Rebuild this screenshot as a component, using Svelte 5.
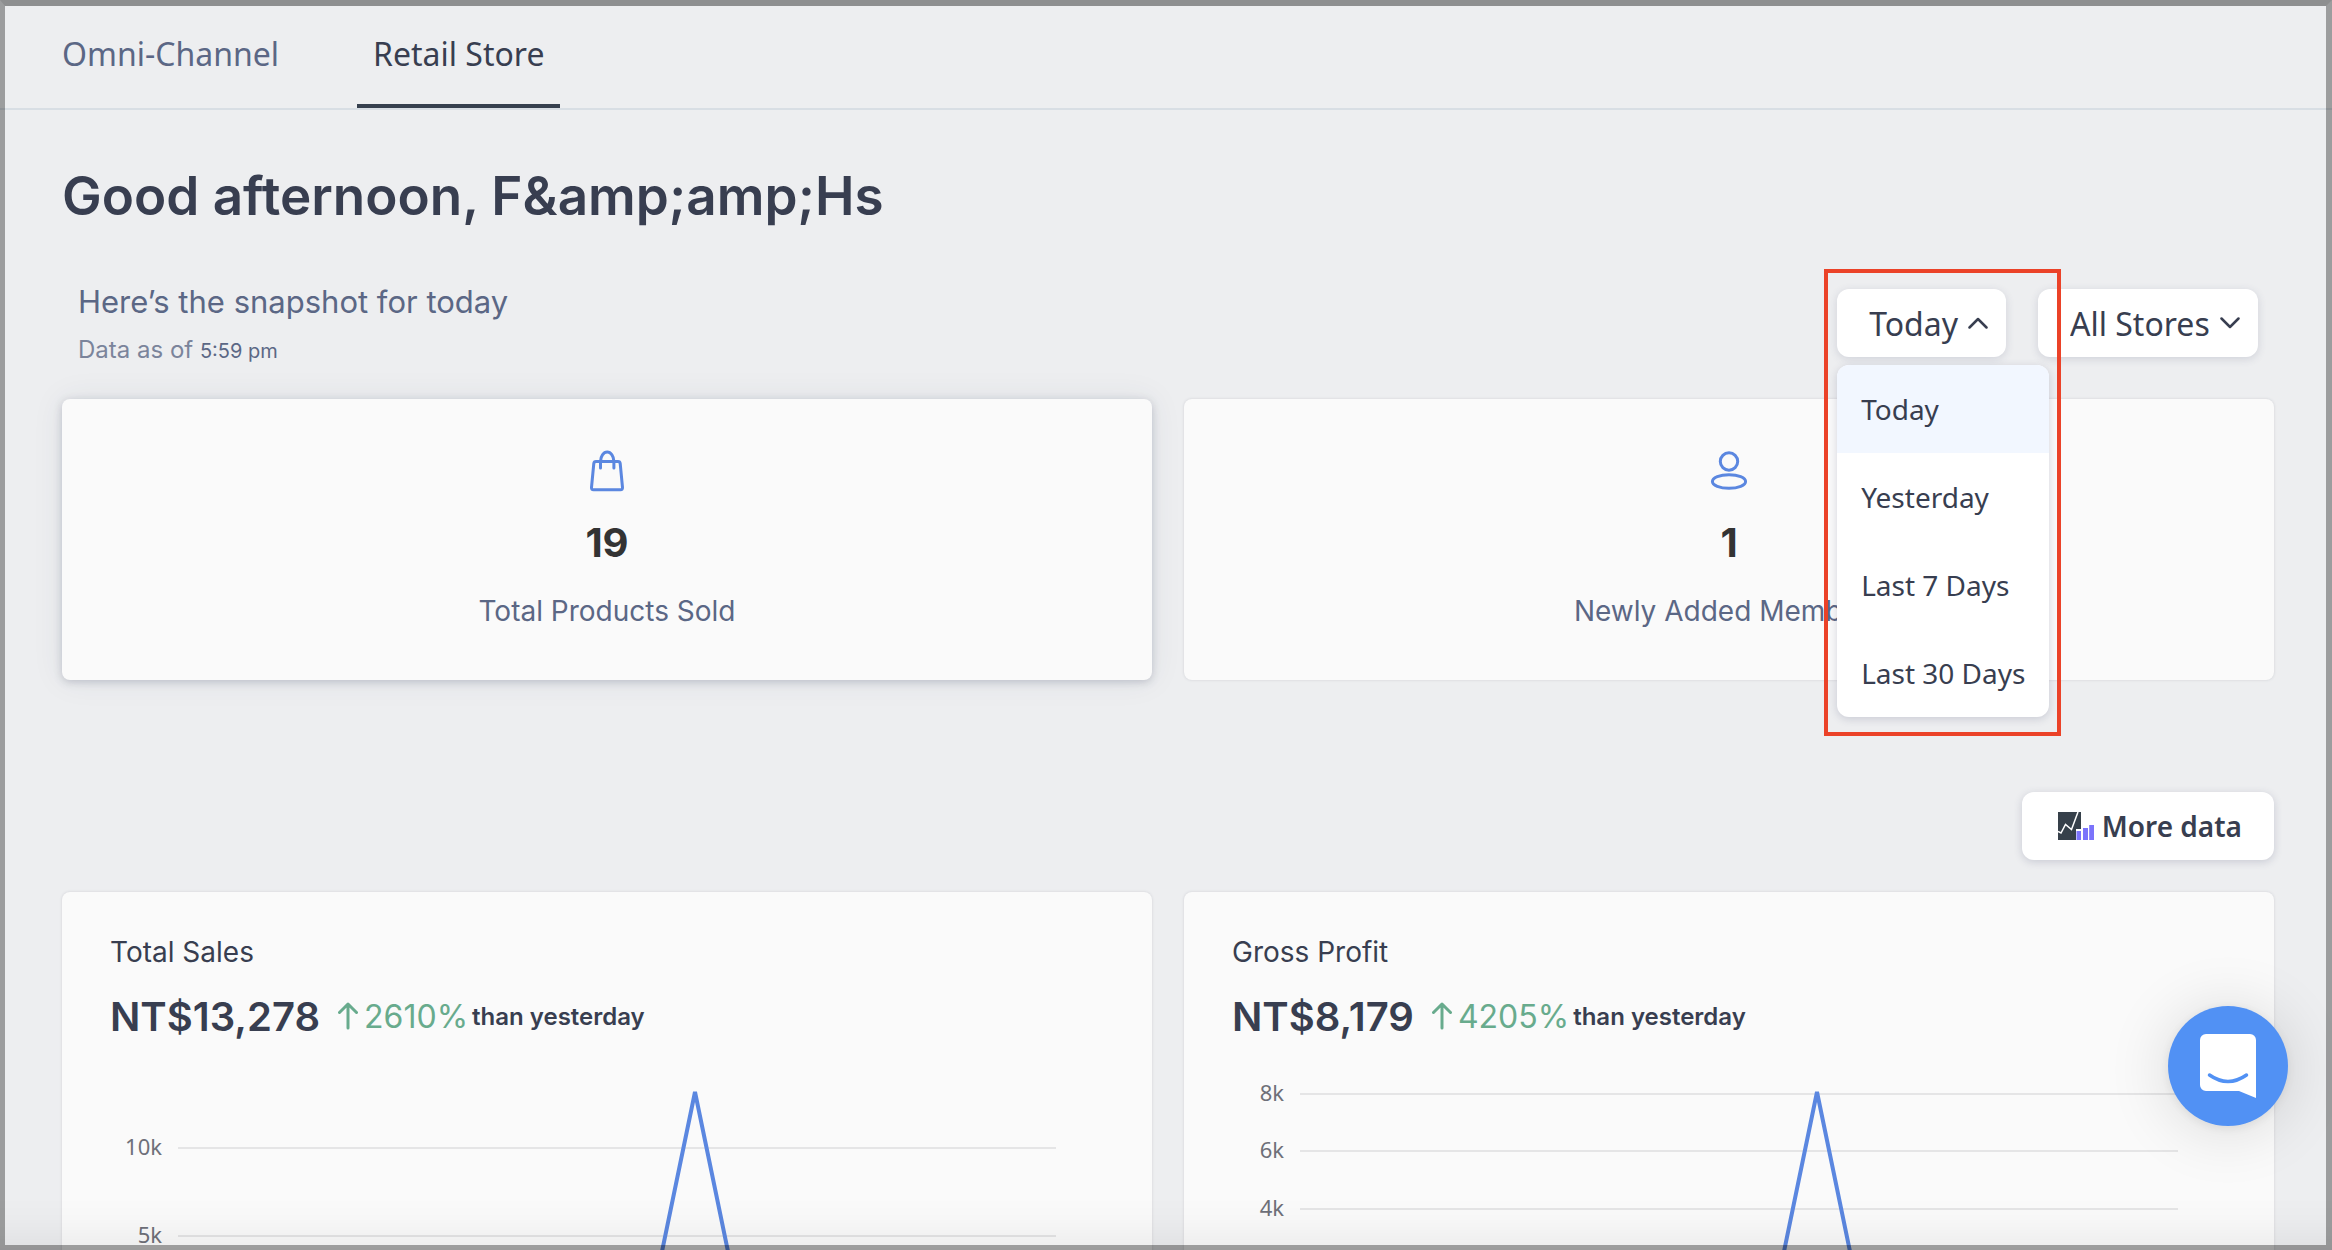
<script lang="ts">
	type Stat = { icon: 'bag' | 'person'; value: number; label: string; raised?: boolean };
	type Tick = { label: string; y: number };
	type Chart = { title: string; value: string; change: string; ticks: Tick[] };

	const tabs = ['Omni-Channel', 'Retail Store'];
	const ranges = ['Today', 'Yesterday', 'Last 7 Days', 'Last 30 Days'];

	const stats: Stat[] = [
		{ icon: 'bag', value: 19, label: 'Total Products Sold', raised: true },
		{ icon: 'person', value: 1, label: 'Newly Added Members' }
	];

	const charts: Chart[] = [
		{
			title: 'Total Sales',
			value: 'NT$13,278',
			change: '2610%',
			ticks: [
				{ label: '10k', y: 80 },
				{ label: '5k', y: 168 }
			]
		},
		{
			title: 'Gross Profit',
			value: 'NT$8,179',
			change: '4205%',
			ticks: [
				{ label: '8k', y: 26 },
				{ label: '6k', y: 83 },
				{ label: '4k', y: 141 }
			]
		}
	];

	let activeTab = $state('Retail Store');
	let range = $state('Today');
	let menuOpen = $state(true);

	function selectRange(value: string) {
		range = value;
		menuOpen = false;
	}
</script>

<div class="page">
	<nav class="tabs">
		{#each tabs as tab (tab)}
			<button class="tab" class:active={tab === activeTab} onclick={() => (activeTab = tab)}>
				{tab}
			</button>
		{/each}
	</nav>

	<main class="content">
		<h1 class="greeting">Good afternoon, F&amp;amp;amp;Hs</h1>

		<div class="toolbar">
			<div class="snapshot">
				<p class="snapshot-title">Here’s the snapshot for today</p>
				<p class="snapshot-time">Data as of <span>5:59 pm</span></p>
			</div>

			<div class="filters">
				<div class="dropdown">
					<button
						class="filter"
						aria-haspopup="menu"
						aria-expanded={menuOpen}
						onclick={() => (menuOpen = !menuOpen)}
					>
						{range}
						<svg class="chevron" class:flipped={menuOpen} viewBox="0 0 20 12">
							<path d="M1.5 1.5 10 10l8.5-8.5" />
						</svg>
					</button>
					{#if menuOpen}
						<div class="menu" role="menu">
							{#each ranges as item (item)}
								<button
									class="menu-item"
									class:selected={item === range}
									role="menuitem"
									onclick={() => selectRange(item)}
								>
									{item}
								</button>
							{/each}
						</div>
						<div class="highlight"></div>
					{/if}
				</div>

				<label class="filter">
					<select aria-label="Store">
						<option>All Stores</option>
					</select>
					<svg class="chevron" viewBox="0 0 20 12">
						<path d="M1.5 1.5 10 10l8.5-8.5" />
					</svg>
				</label>
			</div>
		</div>

		<section class="grid">
			{#each stats as stat (stat.label)}
				<div class="card stat" class:raised={stat.raised}>
					<svg class="stat-icon" viewBox="0 0 48 48">
						{#if stat.icon === 'bag'}
							<path
								d="M13 14.500h22q2 0 2.200 2l2.300 24q.2 2.300-2 2.300h-27q-2.200 0-2-2.300l2.300-24q.2-2 2.200-2zM17.500 21v-6.500a6.700 9.500 0 0 1 13.400 0V21"
							/>
						{:else}
							<circle cx="24" cy="14.5" r="8.7" />
							<ellipse cx="24" cy="34.5" rx="16.600" ry="6.800" />
						{/if}
					</svg>
					<strong class="stat-value">{stat.value}</strong>
					<span class="stat-label">{stat.label}</span>
				</div>
			{/each}
		</section>

		<div class="more">
			<button class="more-btn">
				<svg viewBox="0 0 36 28">
					<path d="M0 0h23v17h-5v11H0z" fill="#36404a" />
					<path
						d="M0 19.500 3 21l4.500-8.500 6 5L20 0"
						fill="none"
						stroke="#ffffff"
						stroke-width="1.5"
					/>
					<path d="M18.500 19h4.500v9h-4.500zM25 16h5v12h-5zM31.200 13H36v15h-4.800z" fill="#7b73fb" />
				</svg>
				More data
			</button>
		</div>

		<section class="grid">
			{#each charts as chart (chart.title)}
				<article class="card chart">
					<h2 class="chart-title">{chart.title}</h2>
					<div class="chart-summary">
						<strong class="chart-value">{chart.value}</strong>
						<svg class="arrow" viewBox="0 0 20 28">
							<path d="M10 26V2M1.500 10.500 10 2l8.500 8.500" />
						</svg>
						<span class="chart-change">{chart.change}</span>
						<span class="chart-note">than yesterday</span>
					</div>
					<svg class="plot" viewBox="0 0 994 262">
						{#each chart.ticks as tick (tick.label)}
							<text x="52" y={tick.y + 7} text-anchor="end">{tick.label}</text>
							<line x1="68" x2="946" y1={tick.y} y2={tick.y} />
						{/each}
						<polyline points="92,256 537,256 585,24 633,256 922,256" />
					</svg>
				</article>
			{/each}
		</section>
	</main>

	<button class="messenger" aria-label="Open chat">
		<svg viewBox="0 0 56 64">
			<path d="M6 0h44a6 6 0 0 1 6 6v58l-17-7H6a6 6 0 0 1-6-6V6a6 6 0 0 1 6-6z" fill="#ffffff" />
			<path
				d="M9.500 41q18.500 13 37 0"
				fill="none"
				stroke="#5191f4"
				stroke-width="3.5"
				stroke-linecap="round"
			/>
		</svg>
	</button>
</div>

<style>
	:global(body) {
		margin: 0;
		background: #edeef0;
	}

	.page {
		height: 100vh;
		overflow: hidden;
		position: relative;
		box-sizing: border-box;
		background: #edeef0;
		color: #383e50;
		font-family: 'Noto Sans', sans-serif;
	}

	/* Window frame with the fade along the lower edge */
	.page::before {
		content: '';
		position: absolute;
		inset: auto 0 0;
		height: 52px;
		background: linear-gradient(rgba(0, 0, 0, 0), rgba(0, 0, 0, 0.01) 40%, rgba(0, 0, 0, 0.05));
		pointer-events: none;
		z-index: 4;
	}

	.page::after {
		content: '';
		position: absolute;
		inset: 0;
		border: 5px solid rgba(0, 0, 0, 0.34);
		border-top: 6px solid rgba(0, 0, 0, 0.4);
		border-right-width: 6px;
		pointer-events: none;
		z-index: 5;
	}

	button,
	select {
		font-family: inherit;
		color: inherit;
		border: none;
		cursor: pointer;
	}

	p,
	h1,
	h2 {
		margin: 0;
	}

	/* Tabs */
	.tabs {
		display: flex;
		gap: 62px;
		height: 108px;
		padding-left: 46px;
		border-bottom: 2px solid #d8dee4;
	}

	.tab {
		padding: 4px 16px 0;
		background: transparent;
		border-bottom: 4px solid transparent;
		font-size: 32px;
		line-height: 100px;
		color: #5b6785;
	}

	.tab.active {
		color: #383e50;
		border-bottom-color: #36404e;
	}

	.content {
		padding: 48px 58px 0 62px;
	}

	.greeting {
		font-family: Inter, sans-serif;
		font-size: 53px;
		font-weight: 600;
		line-height: 76px;
	}

	/* Snapshot row */
	.toolbar {
		display: flex;
		justify-content: space-between;
		padding: 44px 16px 24px;
	}

	.snapshot {
		font-family: Inter, sans-serif;
		color: #5b6785;
	}

	.snapshot-title {
		font-size: 31px;
		line-height: 48px;
	}

	.snapshot-time {
		font-size: 24px;
		line-height: 48px;
		color: #7b849b;
	}

	.snapshot-time span {
		font-size: 20px;
		color: #5b6785;
	}

	.filters {
		display: flex;
		align-items: flex-start;
		gap: 32px;
		padding-top: 11px;
	}

	.filter {
		display: flex;
		align-items: center;
		gap: 10px;
		height: 68px;
		padding: 0 18px 0 32px;
		box-sizing: border-box;
		background: #ffffff;
		border-radius: 12px;
		box-shadow: 0 2px 8px rgba(56, 62, 100, 0.16);
		font-size: 32px;
		white-space: nowrap;
	}

	.filter select {
		appearance: none;
		padding: 0;
		background: transparent;
		font-size: 32px;
	}

	.chevron {
		width: 20px;
		height: 12px;
		fill: none;
		stroke: #383e50;
		stroke-width: 2.5;
		stroke-linecap: round;
		stroke-linejoin: round;
	}

	.chevron.flipped {
		transform: rotate(180deg);
	}

	.dropdown {
		position: relative;
	}

	.menu {
		position: absolute;
		top: 76px;
		left: 0;
		z-index: 2;
		display: flex;
		flex-direction: column;
		overflow: hidden;
		background: #ffffff;
		border-radius: 12px;
		box-shadow: 0 2px 8px rgba(56, 62, 100, 0.2);
	}

	.menu-item {
		height: 88px;
		padding: 0 24px;
		background: transparent;
		font-size: 28px;
		text-align: left;
		white-space: nowrap;
	}

	.menu-item.selected {
		background: #f2f7ff;
	}

	.highlight {
		position: absolute;
		top: -20px;
		left: -13px;
		z-index: 3;
		width: 229px;
		height: 459px;
		border: 4px solid #eb4228;
		pointer-events: none;
	}

	/* Cards */
	.grid {
		display: grid;
		grid-template-columns: 1fr 1fr;
		gap: 32px;
	}

	.card {
		background: #fafafa;
		border-radius: 8px;
		box-shadow: 0 0 3px rgba(56, 62, 80, 0.16);
	}

	.stat {
		display: flex;
		flex-direction: column;
		align-items: center;
		height: 281px;
		padding-top: 48px;
		box-sizing: border-box;
		font-family: Inter, sans-serif;
	}

	.stat.raised {
		box-shadow:
			0 2px 8px rgba(56, 62, 90, 0.24),
			0 0 32px rgba(56, 62, 90, 0.08);
	}

	.stat-icon {
		width: 48px;
		height: 48px;
		fill: none;
		stroke: #5b87e0;
		stroke-width: 3;
		stroke-linecap: round;
		stroke-linejoin: round;
	}

	.stat-value {
		margin-top: 20px;
		font-size: 40px;
		font-weight: 700;
		line-height: 56px;
		color: #333333;
	}

	.stat-label {
		margin-top: 20px;
		font-size: 28px;
		line-height: 40px;
		color: #5b6785;
	}

	.more {
		display: flex;
		justify-content: flex-end;
		padding: 112px 0 32px;
	}

	.more-btn {
		display: flex;
		align-items: center;
		gap: 8px;
		height: 68px;
		padding: 0 32px 0 36px;
		background: #ffffff;
		border-radius: 12px;
		box-shadow: 0 2px 8px rgba(56, 62, 100, 0.2);
		font-size: 28px;
		font-weight: 600;
	}

	.more-btn svg {
		width: 36px;
		height: 28px;
	}

	/* Charts */
	.chart {
		padding: 40px 48px 48px;
		font-family: Inter, sans-serif;
	}

	.chart-title {
		font-size: 28px;
		font-weight: 400;
		line-height: 40px;
	}

	.chart-summary {
		display: flex;
		align-items: center;
		height: 56px;
		margin-top: 16px;
	}

	.chart-value {
		margin-right: 18px;
		font-size: 40px;
		font-weight: 600;
	}

	.arrow {
		width: 20px;
		height: 28px;
		margin-right: 6px;
		fill: none;
		stroke: #68ab8d;
		stroke-width: 3;
		stroke-linecap: round;
		stroke-linejoin: round;
	}

	.chart-change {
		margin-right: 4px;
		font-size: 32px;
		color: #68ab8d;
	}

	.chart-note {
		font-size: 24px;
		font-weight: 600;
	}

	.plot {
		display: block;
		width: 100%;
		margin-top: 24px;
		font-family: 'Noto Sans', sans-serif;
		font-size: 22px;
	}

	.plot text {
		fill: #6e7079;
	}

	.plot line {
		stroke: #e5e5e6;
		stroke-width: 2;
	}

	.plot polyline {
		fill: none;
		stroke: #5b87e0;
		stroke-width: 4;
		stroke-linejoin: bevel;
	}

	.messenger {
		position: fixed;
		right: 44px;
		bottom: 124px;
		z-index: 3;
		display: flex;
		align-items: center;
		justify-content: center;
		width: 120px;
		height: 120px;
		padding: 0;
		background: #5191f4;
		border-radius: 50%;
		box-shadow:
			0 2px 12px rgba(0, 0, 0, 0.08),
			0 4px 64px rgba(0, 0, 0, 0.14);
	}

	.messenger svg {
		width: 56px;
		height: 64px;
	}
</style>
